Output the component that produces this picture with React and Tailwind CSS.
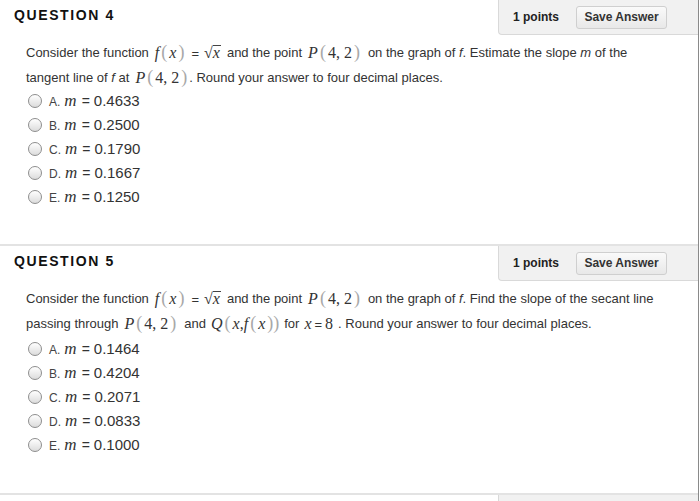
import React from 'react';

const serif = "font-['Liberation_Serif','Times_New_Roman',serif]";

function I({ children, cls = '' }) {
  return <span className={`${serif} italic text-[16px] ${cls}`}>{children}</span>;
}

function Par({ children }) {
  return <span className={`${serif} text-[18px] text-[#a8a8a8] mx-[2px]`}>{children}</span>;
}

function Eq() {
  return <span className="mx-[5px] text-[13px]">=</span>;
}

function Sqrt() {
  return (
    <span className="inline-flex items-baseline">
      <span className={`${serif} text-[16px] leading-none`}>√</span>
      <span className={`${serif} italic text-[16px] leading-[14px] border-t border-[#444] pr-[1px]`}>x</span>
    </span>
  );
}

function Fx() {
  return (
    <span className="inline-flex items-baseline mx-[6px]">
      <I>f</I>
      <Par>(</Par>
      <I>x</I>
      <Par>)</Par>
      <Eq />
      <Sqrt />
    </span>
  );
}

function P42({ cls = 'mx-[6px]' }) {
  return (
    <span className={`inline-flex items-baseline ${cls}`}>
      <I>P</I>
      <Par>(</Par>
      <span className={`${serif} text-[16px]`}>4,&nbsp;2</span>
      <Par>)</Par>
    </span>
  );
}

function Header({ n }) {
  return (
    <div className="flex justify-between h-[35px]">
      <div className="pl-[14px] pt-[5px] text-[14px] font-bold tracking-[1.6px] text-[#111]">QUESTION {n}</div>
      <div className="w-[200px] h-[35px] bg-[#f1f1f1] border-l border-b border-[#d9d9d9] rounded-bl-[4px] flex items-center pl-[14px]">
        <span className="text-[12px] font-bold text-[#222]">1 points</span>
        <button className="ml-[17px] w-[91px] h-[23px] rounded-[3px] border border-[#cfcfcf] bg-gradient-to-b from-[#fafafa] to-[#e8e8e8] text-[12px] font-bold text-[#333]">
          Save Answer
        </button>
      </div>
    </div>
  );
}

function Option({ letter, value }) {
  return (
    <div className="h-[24px] flex items-center pl-[28px]">
      <span className="w-[14px] h-[14px] rounded-full border border-[#8e8e8e] bg-gradient-to-b from-white to-[#dcdcdc]" />
      <span className="ml-[7px] self-start mt-[4px] text-[12px] text-[#444]">{letter}.</span>
      <span className={`${serif} italic text-[17px] text-[#333] ml-[4px]`}>m</span>
      <span className="ml-[5px] mr-[4px] text-[14px] text-[#333]">=</span>
      <span className="text-[15px] text-[#333]">{value}</span>
    </div>
  );
}

export default function App() {
  return (
    <div className="w-[699px] h-[501px] overflow-hidden bg-white border-r border-[#8a8a8a] font-['Liberation_Sans',Arial,sans-serif] text-[#333]">
      <Header n={4} />
      <div className="pt-[5px] pl-[26px] text-[13px]">
        <div className="h-[25px] flex items-center whitespace-nowrap">
          Consider the function<Fx />and the point<P42 />on the graph of <span className="italic">&nbsp;f</span>. Estimate the slope&nbsp;<span className="italic">m</span>&nbsp;of the
        </div>
        <div className="h-[25px] flex items-center whitespace-nowrap">
          tangent line of <span className="italic">&nbsp;f&nbsp;</span> at<P42 cls="ml-[6px]" />. Round your answer to four decimal places.
        </div>
      </div>
      <div className="mt-[-1px]">
        <Option letter="A" value="0.4633" />
        <Option letter="B" value="0.2500" />
        <Option letter="C" value="0.1790" />
        <Option letter="D" value="0.1667" />
        <Option letter="E" value="0.1250" />
      </div>

      <div className="mt-[35px] border-t-2 border-[#e3e3e3]">
        <Header n={5} />
        <div className="pt-[5px] pl-[26px] text-[13px]">
          <div className="h-[25px] flex items-center whitespace-nowrap">
            Consider the function<Fx />and the point<P42 />on the graph of <span className="italic">&nbsp;f</span>. Find the slope of the secant line
          </div>
          <div className="h-[25px] flex items-center whitespace-nowrap">
            passing through<P42 />and
            <span className="inline-flex items-baseline mx-[5px]">
              <I>Q</I>
              <Par>(</Par>
              <I>x</I>
              <span className={`${serif} text-[16px]`}>,</span>
              <I>f</I>
              <Par>(</Par>
              <I>x</I>
              <span className={`${serif} text-[18px] text-[#a8a8a8] ml-[2px]`}>))</span>
            </span>
            for
            <span className="inline-flex items-baseline mx-[5px]">
              <I>x</I>
              <span className="mx-[3px] text-[13px]">=</span>
              <span className={`${serif} text-[16px]`}>8</span>
            </span>
            . Round your answer to four decimal places.
          </div>
        </div>
        <div className="mt-[1px]">
          <Option letter="A" value="0.1464" />
          <Option letter="B" value="0.4204" />
          <Option letter="C" value="0.2071" />
          <Option letter="D" value="0.0833" />
          <Option letter="E" value="0.1000" />
        </div>
        <div className="mt-[36px] border-t-2 border-[#e3e3e3] flex justify-end">
          <div className="w-[200px] h-[20px] bg-[#f1f1f1] border-l border-[#d9d9d9]" />
        </div>
      </div>
    </div>
  );
}
